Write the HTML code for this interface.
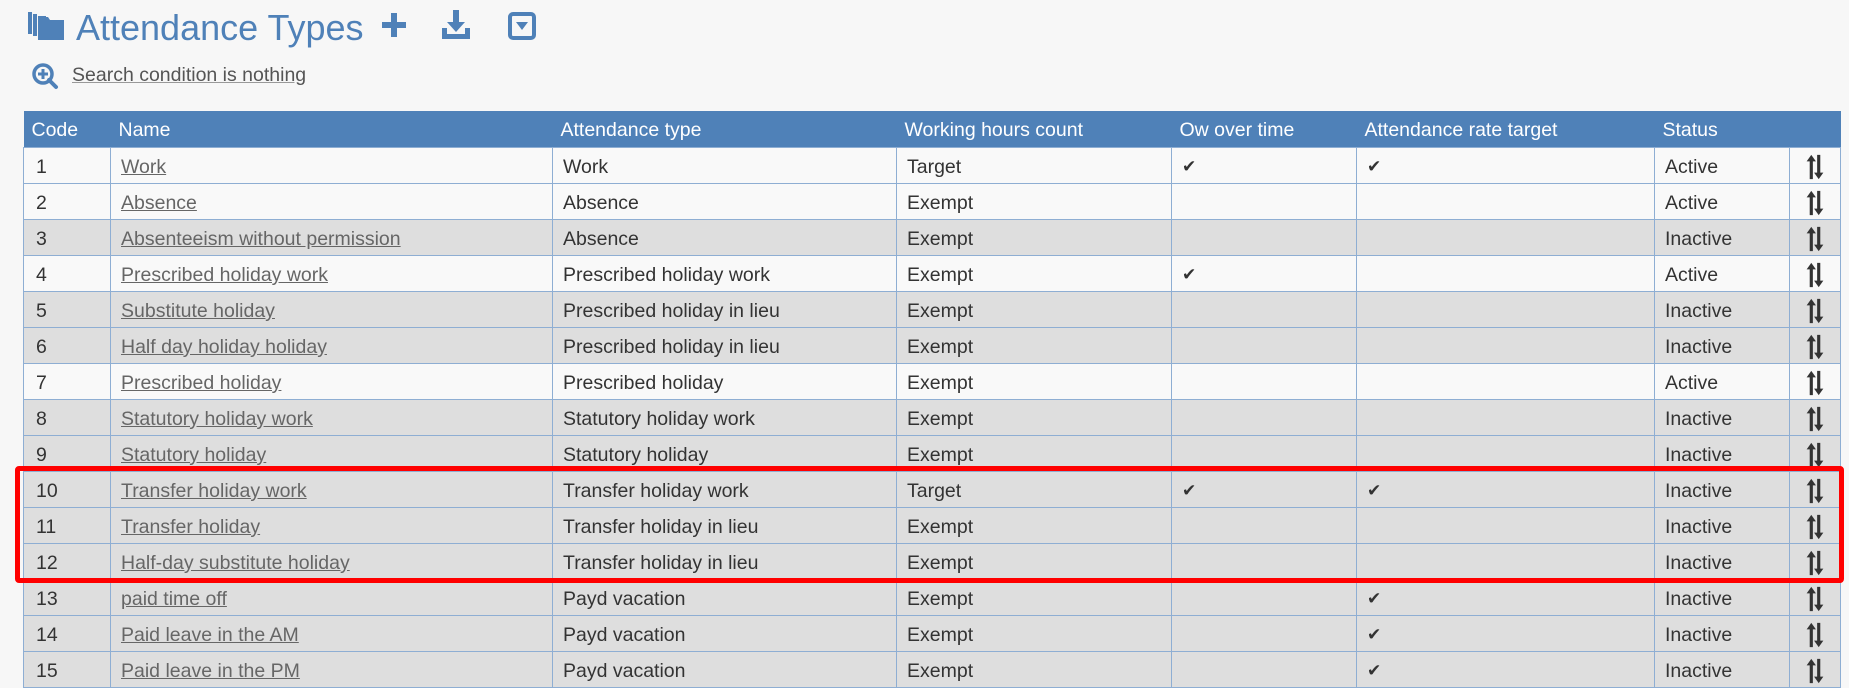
<!DOCTYPE html>
<html><head><meta charset="utf-8"><style>
body{margin:0;background:#f7f7f7;font-family:"Liberation Sans",Arial,sans-serif;width:1849px;height:687px;overflow:hidden;position:relative}
.title{position:absolute;left:76px;top:7px;font-size:36px;color:#4f81b8}
.ico{position:absolute}
.search{position:absolute;left:72px;top:64px;font-size:19.5px;color:#555;text-decoration:underline;text-decoration-color:#999}
table{position:absolute;left:23px;top:111px;border-collapse:collapse;table-layout:fixed;width:1817px;font-size:19.5px;color:#333}
tr{height:36px}
th{background:#4f81b8;color:#fff;font-weight:normal;text-align:left;height:36px;padding:3px 0 0 8px;box-sizing:border-box;line-height:22px}
td{height:36px;border:1px solid #8eaed3;padding:4px 0 0 10px;box-sizing:border-box;white-space:nowrap;line-height:22px;overflow:hidden}
td:first-child{padding-left:12px}
tr.w td{background:#f9f9f9}tr.g td{background:#dedede}
td a{color:#666;text-decoration:underline}
.ck{font-size:17px;color:#333;padding-left:10px}
.s{padding:0}
.s svg{display:block;margin:4px auto 0}
.red{position:absolute;left:15px;top:466px;width:1819px;height:107px;border:5px solid #f00;border-radius:4px}
</style></head><body>
<svg class="ico" style="left:26px;top:12px" width="40" height="28" viewBox="0 0 40 28"><g fill="#4f81b8"><rect x="2" y="0" width="4" height="22"/><rect x="7" y="2" width="4" height="22"/><rect x="12" y="4" width="8" height="22"/><path d="M12 8h26v20H12z"/><path d="M12 5h10l2 3H12z"/></g></svg>
<div class="title">Attendance Types</div>
<svg class="ico" style="left:380px;top:11px" width="28" height="28"><path d="M14 2v24M2 14h24" stroke="#4f81b8" stroke-width="6"/></svg>
<svg class="ico" style="left:440px;top:8px" width="32" height="32" viewBox="0 0 32 32"><g fill="#4f81b8"><rect x="13" y="2" width="6" height="14"/><path d="M7 14h18l-9 10z"/><path d="M2 20h5v6h18v-6h5v11H2z"/></g></svg>
<svg class="ico" style="left:507px;top:11px" width="30" height="30"><rect x="3" y="3" width="24" height="24" rx="3" fill="none" stroke="#4f81b8" stroke-width="4"/><path d="M9 11h12l-6 8z" fill="#4f81b8"/></svg>
<svg class="ico" style="left:31px;top:62px" width="28" height="28"><circle cx="12" cy="12" r="9" fill="none" stroke="#4f81b8" stroke-width="3.5"/><path d="M12 7v10M7 12h10" stroke="#4f81b8" stroke-width="3"/><path d="M18 18l7 7" stroke="#4f81b8" stroke-width="4" stroke-linecap="round"/></svg>
<div class="search">Search condition is nothing</div>
<svg width="0" height="0" style="position:absolute"><defs><symbol id="sa" viewBox="0 0 18 28"><path d="M5 27V6M13 1v21" stroke="#333" stroke-width="3.4"/><path d="M0 8l5-7 5 7z M8 20l5 7 5-7z" fill="#333"/></symbol></defs></svg>
<table>
<colgroup><col style="width:87px"><col style="width:442px"><col style="width:344px"><col style="width:275px"><col style="width:185px"><col style="width:298px"><col style="width:135px"><col style="width:51px"></colgroup>
<tr><th>Code</th><th>Name</th><th>Attendance type</th><th>Working hours count</th><th>Ow over time</th><th>Attendance rate target</th><th>Status</th><th></th></tr>
<tr class="w"><td>1</td><td><a>Work</a></td><td>Work</td><td>Target</td><td class="ck">✔</td><td class="ck">✔</td><td>Active</td><td class="s"><svg width="18" height="26"><use href="#sa"/></svg></td></tr>
<tr class="w"><td>2</td><td><a>Absence</a></td><td>Absence</td><td>Exempt</td><td></td><td></td><td>Active</td><td class="s"><svg width="18" height="26"><use href="#sa"/></svg></td></tr>
<tr class="g"><td>3</td><td><a>Absenteeism without permission</a></td><td>Absence</td><td>Exempt</td><td></td><td></td><td>Inactive</td><td class="s"><svg width="18" height="26"><use href="#sa"/></svg></td></tr>
<tr class="w"><td>4</td><td><a>Prescribed holiday work</a></td><td>Prescribed holiday work</td><td>Exempt</td><td class="ck">✔</td><td></td><td>Active</td><td class="s"><svg width="18" height="26"><use href="#sa"/></svg></td></tr>
<tr class="g"><td>5</td><td><a>Substitute holiday</a></td><td>Prescribed holiday in lieu</td><td>Exempt</td><td></td><td></td><td>Inactive</td><td class="s"><svg width="18" height="26"><use href="#sa"/></svg></td></tr>
<tr class="g"><td>6</td><td><a>Half day holiday holiday</a></td><td>Prescribed holiday in lieu</td><td>Exempt</td><td></td><td></td><td>Inactive</td><td class="s"><svg width="18" height="26"><use href="#sa"/></svg></td></tr>
<tr class="w"><td>7</td><td><a>Prescribed holiday</a></td><td>Prescribed holiday</td><td>Exempt</td><td></td><td></td><td>Active</td><td class="s"><svg width="18" height="26"><use href="#sa"/></svg></td></tr>
<tr class="g"><td>8</td><td><a>Statutory holiday work</a></td><td>Statutory holiday work</td><td>Exempt</td><td></td><td></td><td>Inactive</td><td class="s"><svg width="18" height="26"><use href="#sa"/></svg></td></tr>
<tr class="g"><td>9</td><td><a>Statutory holiday</a></td><td>Statutory holiday</td><td>Exempt</td><td></td><td></td><td>Inactive</td><td class="s"><svg width="18" height="26"><use href="#sa"/></svg></td></tr>
<tr class="g"><td>10</td><td><a>Transfer holiday work</a></td><td>Transfer holiday work</td><td>Target</td><td class="ck">✔</td><td class="ck">✔</td><td>Inactive</td><td class="s"><svg width="18" height="26"><use href="#sa"/></svg></td></tr>
<tr class="g"><td>11</td><td><a>Transfer holiday</a></td><td>Transfer holiday in lieu</td><td>Exempt</td><td></td><td></td><td>Inactive</td><td class="s"><svg width="18" height="26"><use href="#sa"/></svg></td></tr>
<tr class="g"><td>12</td><td><a>Half-day substitute holiday</a></td><td>Transfer holiday in lieu</td><td>Exempt</td><td></td><td></td><td>Inactive</td><td class="s"><svg width="18" height="26"><use href="#sa"/></svg></td></tr>
<tr class="g"><td>13</td><td><a>paid time off</a></td><td>Payd vacation</td><td>Exempt</td><td></td><td class="ck">✔</td><td>Inactive</td><td class="s"><svg width="18" height="26"><use href="#sa"/></svg></td></tr>
<tr class="g"><td>14</td><td><a>Paid leave in the AM</a></td><td>Payd vacation</td><td>Exempt</td><td></td><td class="ck">✔</td><td>Inactive</td><td class="s"><svg width="18" height="26"><use href="#sa"/></svg></td></tr>
<tr class="g"><td>15</td><td><a>Paid leave in the PM</a></td><td>Payd vacation</td><td>Exempt</td><td></td><td class="ck">✔</td><td>Inactive</td><td class="s"><svg width="18" height="26"><use href="#sa"/></svg></td></tr>
</table>
<div class="red"></div>
</body></html>
